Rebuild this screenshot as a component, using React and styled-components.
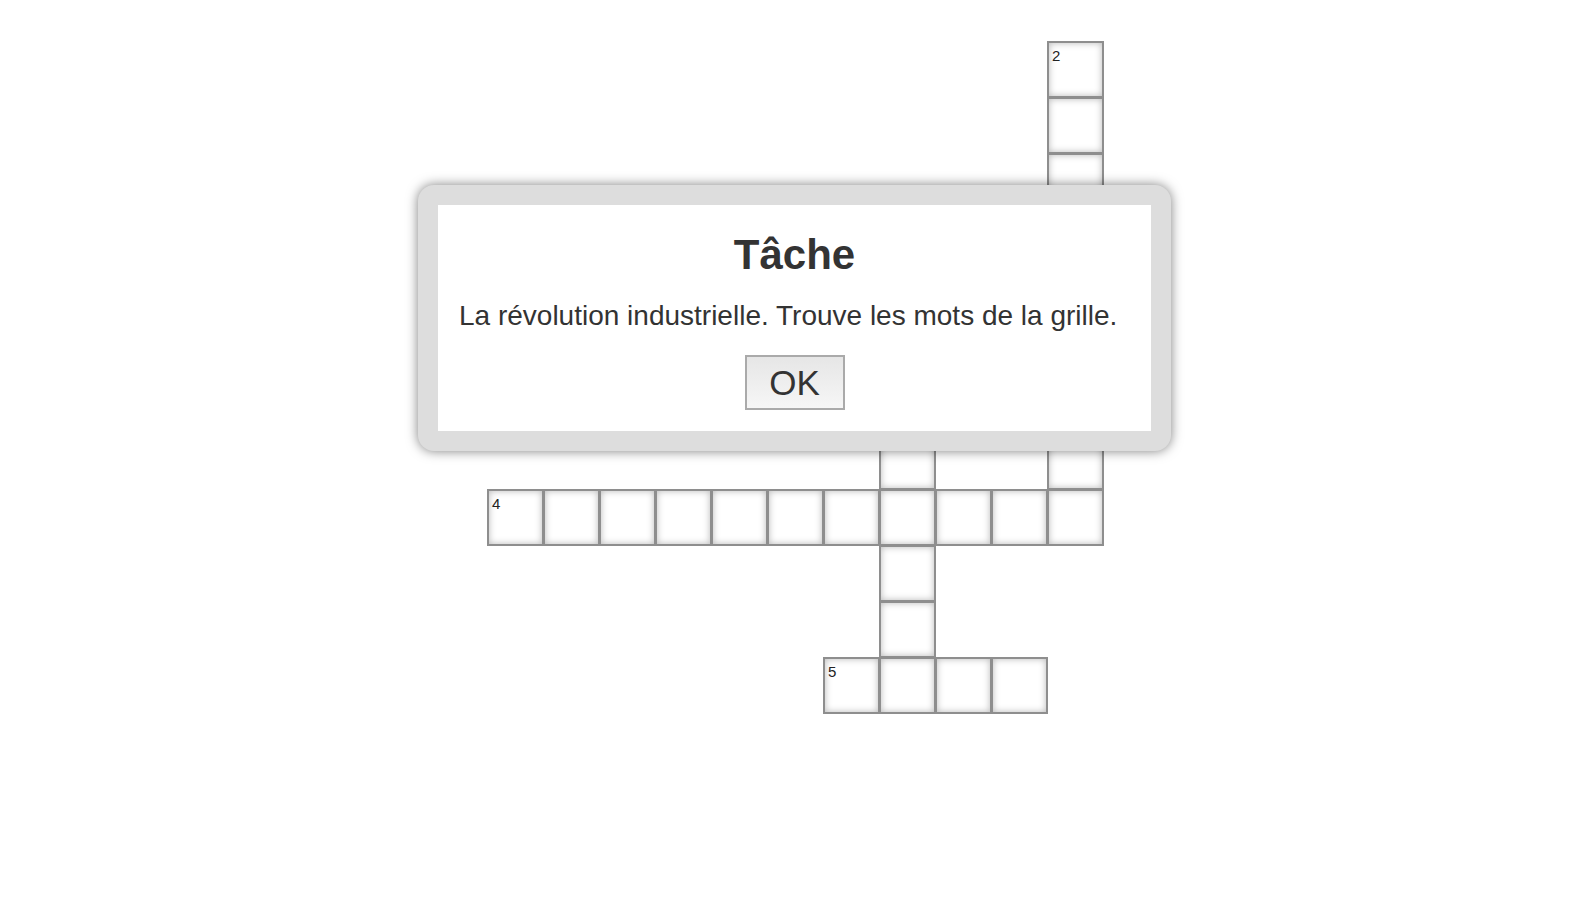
import React from 'react'
import styled, { createGlobalStyle } from 'styled-components'

const GlobalStyle = createGlobalStyle`
  html, body {
    margin: 0;
    padding: 0;
    background: #ffffff;
    font-family: "Liberation Sans", Arial, Helvetica, sans-serif;
    color: #333333;
  }
`

const cells = []
const add = (r, c, n) => {
  const found = cells.find((x) => x.r === r && x.c === c)
  if (!found) cells.push({ r, c, n })
  else if (n) found.n = n
}
// 2 down
for (let r = 0; r <= 8; r++) add(r, 10, r === 0 ? 2 : null)
// 1 across (under the dialog)
for (let c = 4; c <= 10; c++) add(4, c, c === 4 ? 1 : null)
// 3 down
for (let r = 4; r <= 11; r++) add(r, 7, null)
// 4 across
for (let c = 0; c <= 10; c++) add(8, c, c === 0 ? 4 : null)
// 5 across
for (let c = 6; c <= 9; c++) add(11, c, c === 6 ? 5 : null)

export default function App() {
  return (
    <Page>
      <GlobalStyle />
      <Grid>
        {cells.map((cell) => (
          <Cell key={`${cell.r}-${cell.c}`} $row={cell.r} $col={cell.c}>
            {cell.n && <Num>{cell.n}</Num>}
          </Cell>
        ))}
      </Grid>

      <Dialog>
        <DialogInner>
          <Title>Tâche</Title>
          <Message>La révolution industrielle. Trouve les mots de la grille.</Message>
          <OkButton>OK</OkButton>
        </DialogInner>
      </Dialog>
    </Page>
  )
}

const Page = styled.div`
  position: relative;
  width: 1596px;
  height: 902px;
  overflow: hidden;
`

const Grid = styled.div`
  display: grid;
  grid-template-columns: repeat(11, 56px);
  grid-template-rows: repeat(12, 56px);
  margin-left: 487px;
  padding-top: 41px;
  width: 616px;
`

const Cell = styled.div`
  grid-row: ${(p) => p.$row + 1};
  grid-column: ${(p) => p.$col + 1};
  position: relative;
  box-sizing: border-box;
  width: 57px;
  height: 57px;
  border: 2px solid #8e8e8e;
  background: #ffffff;
  box-shadow: inset 0 0 7px rgba(0, 0, 0, 0.28);
`

const Num = styled.span`
  position: absolute;
  top: 5px;
  left: 3px;
  font-size: 15px;
  line-height: 1;
  color: #222222;
`

const Dialog = styled.div`
  position: absolute;
  left: 418px;
  top: 185px;
  width: 753px;
  box-sizing: border-box;
  padding: 20px;
  background: #dddddd;
  border-radius: 16px;
  box-shadow: 0 0 12px rgba(0, 0, 0, 0.5);
`

const DialogInner = styled.div`
  background: #ffffff;
  display: flex;
  flex-direction: column;
  align-items: center;
  padding: 26px 0 21px;
`

const Title = styled.h1`
  margin: 0;
  font-size: 42px;
  font-weight: bold;
  line-height: 48px;
  color: #333333;
`

const Message = styled.p`
  align-self: stretch;
  margin: 21px 0 0;
  padding: 0 21px;
  font-size: 28px;
  line-height: 32px;
  color: #333333;
`

const OkButton = styled.button`
  margin-top: 23px;
  width: 100px;
  height: 55px;
  box-sizing: border-box;
  border: 2px solid #aaaaaa;
  background: linear-gradient(#e6e6e6, #f6f6f6);
  font-family: "Liberation Sans", Arial, Helvetica, sans-serif;
  font-size: 35px;
  color: #333333;
  padding: 0;
  cursor: pointer;
`
